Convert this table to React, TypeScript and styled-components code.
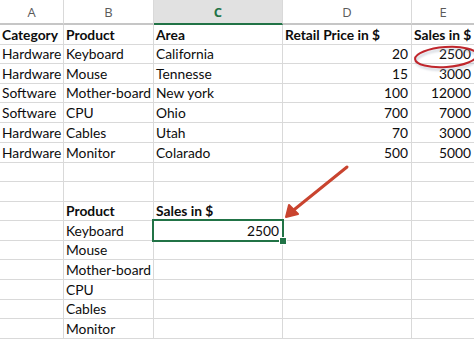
import React from "react";
import styled, { createGlobalStyle } from "styled-components";

const Global = createGlobalStyle`
  html, body { margin: 0; padding: 0; background: #ffffff; }
  body { width: 474px; height: 340px; overflow: hidden; }
`;

const GRID_LINE = "#d9d9d9";
const GREEN = "#217346";

const Sheet = styled.div`
  position: relative;
  width: 474px;
  height: 340px;
  overflow: hidden;
  display: grid;
  grid-template-columns: 64px 90px 129px 129px 1fr;
  align-content: start;
  font-family: Lato, "Liberation Sans", sans-serif;
  font-size: 13.8px;
  color: #0d0d0d;
`;

const ColHead = styled.div<{ $active?: boolean; $last?: boolean }>`
  box-sizing: border-box;
  height: 25px;
  display: flex;
  align-items: center;
  justify-content: center;
  font-family: "Open Sans", "DejaVu Sans", sans-serif;
  font-size: 13px;
  font-weight: ${(p) => (p.$active ? 700 : 400)};
  color: ${(p) => (p.$active ? GREEN : "#5a5a5a")};
  background: ${(p) => (p.$active ? "#e1e1e1" : "#ffffff")};
  border-right: ${(p) => (p.$last ? "none" : `1px solid ${GRID_LINE}`)};
  border-bottom: 2px solid ${(p) => (p.$active ? GREEN : "#c6c6c6")};
  padding-top: 1px;
`;

const Cell = styled.div<{ $h: number; $bold?: boolean; $num?: boolean; $last?: boolean }>`
  position: relative;
  box-sizing: border-box;
  height: ${(p) => p.$h}px;
  display: flex;
  align-items: flex-end;
  justify-content: ${(p) => (p.$num ? "flex-end" : "flex-start")};
  padding: 0 ${(p) => (p.$num ? 3 : 2)}px 1px ${(p) => (p.$num ? 0 : 2)}px;
  line-height: 17px;
  font-weight: ${(p) => (p.$bold ? 700 : 400)};
  white-space: nowrap;
  border-right: ${(p) => (p.$last ? "none" : `1px solid ${GRID_LINE}`)};
  border-bottom: 1px solid ${GRID_LINE};
`;

const Selection = styled.div`
  position: absolute;
  z-index: 2;
  left: -2px;
  top: -2px;
  right: -2px;
  bottom: -2px;
  border: 2px solid ${GREEN};
  pointer-events: none;
`;

const FillHandle = styled.div`
  position: absolute;
  box-sizing: border-box;
  right: -5px;
  bottom: -5px;
  width: 8px;
  height: 8px;
  background: ${GREEN};
  border: 1px solid #ffffff;
`;

const Overlay = styled.svg`
  position: absolute;
  z-index: 3;
  left: 0;
  top: 0;
  width: 474px;
  height: 340px;
  pointer-events: none;
`;

type Row = { cells: string[]; bold?: boolean };

const heights = [20, 19, 20, 19, 20, 20, 20, 19, 20, 19, 20, 19, 20, 20, 19, 20];

const rows: Row[] = [
  { cells: ["Category", "Product", "Area", "Retail Price in $", "Sales in $"], bold: true },
  { cells: ["Hardware", "Keyboard", "California", "20", "2500"] },
  { cells: ["Hardware", "Mouse", "Tennesse", "15", "3000"] },
  { cells: ["Software", "Mother-board", "New york", "100", "12000"] },
  { cells: ["Software", "CPU", "Ohio", "700", "7000"] },
  { cells: ["Hardware", "Cables", "Utah", "70", "3000"] },
  { cells: ["Hardware", "Monitor", "Colarado", "500", "5000"] },
  { cells: ["", "", "", "", ""] },
  { cells: ["", "", "", "", ""] },
  { cells: ["", "Product", "Sales in $", "", ""], bold: true },
  { cells: ["", "Keyboard", "2500", "", ""] },
  { cells: ["", "Mouse", "", "", ""] },
  { cells: ["", "Mother-board", "", "", ""] },
  { cells: ["", "CPU", "", "", ""] },
  { cells: ["", "Cables", "", "", ""] },
  { cells: ["", "Monitor", "", "", ""] },
];

const isNum = (s: string) => /^\d+$/.test(s);

export default function App() {
  const letters = ["A", "B", "C", "D", "E"];
  return (
    <>
      <Global />
      <Sheet>
        {letters.map((l, i) => (
          <ColHead key={l} $active={l === "C"} $last={i === 4}>
            {l}
          </ColHead>
        ))}
        {rows.map((r, ri) =>
          r.cells.map((c, ci) => (
            <Cell
              key={`${ri}-${ci}`}
              $h={heights[ri]}
              $bold={r.bold}
              $num={!r.bold && isNum(c)}
              $last={ci === 4}
            >
              {c}
              {ri === 10 && ci === 2 && (
                <Selection>
                  <FillHandle />
                </Selection>
              )}
            </Cell>
          ))
        )}
        <Overlay viewBox="0 0 474 340">
          <defs>
            <filter id="soft" x="-20%" y="-50%" width="140%" height="200%">
              <feGaussianBlur stdDeviation="1.2" />
            </filter>
          </defs>
          <ellipse
            cx="446"
            cy="58"
            rx="31"
            ry="10"
            fill="none"
            stroke="#9aa3b5"
            strokeWidth="2"
            opacity="0.5"
            filter="url(#soft)"
            transform="rotate(-4 446 58) translate(1 1.5)"
          />
          <ellipse
            cx="446"
            cy="57"
            rx="31"
            ry="10"
            fill="none"
            stroke="#c0262c"
            strokeWidth="2"
            transform="rotate(-4 446 57)"
          />
          <line x1="347" y1="167" x2="290" y2="213" stroke="#c9442f" strokeWidth="3" strokeLinecap="round" />
          <path d="M286 217 L289 205 L298 214 Z" fill="#c9442f" stroke="#c9442f" strokeWidth="2" strokeLinejoin="round" />
        </Overlay>
      </Sheet>
    </>
  );
}
